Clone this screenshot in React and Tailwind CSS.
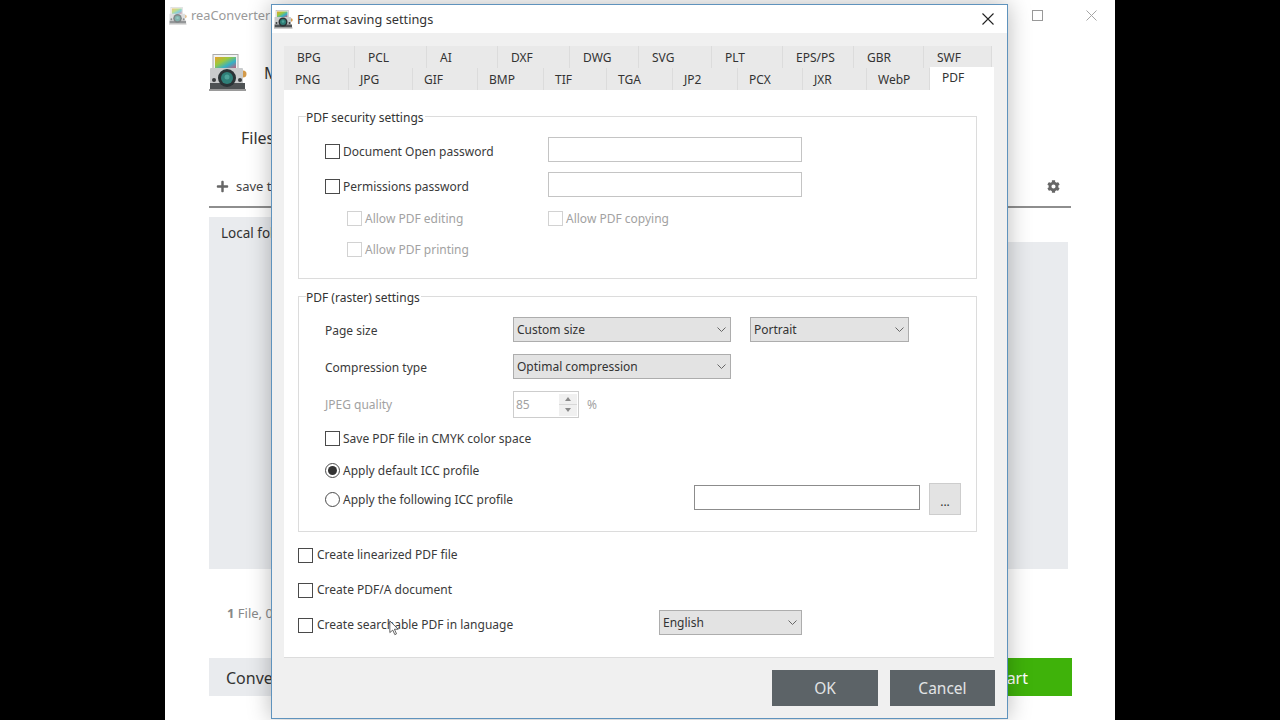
import React from 'react';
import { FaCog, FaPlus } from 'react-icons/fa';

const tabsTop = [
  ['BPG', 71], ['PCL', 72], ['AI', 71], ['DXF', 72], ['DWG', 69], ['SVG', 73], ['PLT', 71], ['EPS/PS', 71], ['GBR', 70], ['SWF', 68],
];
const tabsBottom = [
  ['PNG', 65], ['JPG', 64], ['GIF', 65], ['BMP', 66], ['TIF', 63], ['TGA', 66], ['JP2', 65], ['PCX', 65], ['JXR', 64], ['WebP', 63],
];

const Check = ({ disabled }) => (
  <span className={`block w-[15px] h-[15px] shrink-0 border ${disabled ? 'border-[#d2d2d2] bg-white' : 'border-[#4a4a4a] bg-white'}`}></span>
);

const Label = ({ children, disabled, className = '' }) => (
  <span className={`leading-none ${disabled ? 'text-[#a2a2a2]' : 'text-[#3a3a3a]'} ${className}`}>{children}</span>
);

const Select = ({ value, className = '' }) => (
  <div className={`flex items-center justify-between h-[25px] pl-[3px] pr-[4px] bg-[#e3e3e3] border border-[#adadad] text-[#333] ${className}`}>
    <span>{value}</span>
    <svg width="9" height="5" viewBox="0 0 9 5" fill="none" stroke="#666" strokeWidth="1"><path d="M0.5 0.5 L4.5 4.5 L8.5 0.5" /></svg>
  </div>
);

const Logo = ({ size }) => (
  <svg width={size} height={size} viewBox="0 0 38 38">
    <defs>
      <linearGradient id="pic" x1="0" y1="0" x2="1" y2="1">
        <stop offset="0" stopColor="#e8a02c" />
        <stop offset="0.35" stopColor="#9cc83c" />
        <stop offset="0.65" stopColor="#35b0c8" />
        <stop offset="1" stopColor="#d8506c" />
      </linearGradient>
    </defs>
    <rect x="4" y="0.5" width="25" height="17" fill="#f2f2f2" stroke="#aaa" />
    <rect x="6" y="3" width="21" height="12" fill="url(#pic)" />
    <circle cx="34" cy="20" r="3.5" fill="#d39a4a" />
    <rect x="1" y="14" width="33" height="16" rx="1" fill="#c9cbcc" />
    <rect x="1" y="29" width="35" height="6" fill="#4e5254" />
    <rect x="0" y="35" width="37" height="2" fill="#9a9a9a" />
    <circle cx="18" cy="24" r="9" fill="#2b3336" />
    <circle cx="18" cy="24" r="6" fill="#2f7f78" />
    <circle cx="18" cy="23" r="2.5" fill="#4fa39a" />
    <circle cx="5" cy="26" r="2" fill="#3a3d3f" />
    <circle cx="31" cy="26" r="2" fill="#3a3d3f" />
  </svg>
);

const App = () => {
  return (
    <div className="relative w-[1280px] h-[720px] overflow-hidden bg-black flex justify-center font-['Noto_Sans',sans-serif] text-[12px]">
      {/* app behind the dialog */}
      <div className="w-[950px] h-full bg-white flex flex-col text-[#555]">
        <div className="flex items-center justify-between h-[29px] pt-[1px] pl-[4px] pr-[18px]">
          <div className="flex items-center gap-[4px] mt-[2px]">
            <div className="opacity-60"><Logo size={18} /></div>
            <span className="text-[12.8px] text-[#9a9a9a]">reaConverter</span>
          </div>
          <div className="flex items-center gap-[43px]">
            <span className="block w-[11px] h-[11px] border border-[#999]"></span>
            <svg width="11" height="11" viewBox="0 0 11 11" stroke="#a5a5a5" strokeWidth="1"><path d="M0.5 0.5 L10.5 10.5 M10.5 0.5 L0.5 10.5" /></svg>
          </div>
        </div>
        <div className="flex items-center gap-[17px] pl-[44px] mt-[25px] h-[38px]">
          <Logo size={38} />
          <span className="text-[16px] text-[#333]">M</span>
        </div>
        <div className="pl-[76px] mt-[34px] text-[16px] text-[#333] leading-[24px]">Files</div>
        <div className="flex items-center justify-between pl-[51px] pr-[55px] mt-[26px] h-[20px]">
          <span className="flex items-center gap-[7px] text-[13px] text-[#444]"><FaPlus size={13} className="text-[#666]" /><span className="pt-[2px]">save t</span></span>
          <FaCog size={13} className="text-[#666]" />
        </div>
        <div className="ml-[44px] mr-[44px] mt-[10px] border-t-2 border-[#8e8e8e]"></div>
        <div className="ml-[44px] mr-[47px] mt-[9px] flex flex-col h-[352px]">
          <div className="w-[110px] h-[25px] bg-[#e9ebee] pl-[12px] text-[13.5px] text-[#333] leading-[33px]">Local folder</div>
          <div className="flex-1 bg-[#e9ebee]"></div>
        </div>
        <div className="pl-[62px] mt-[35px] text-[#888] text-[13px] leading-[18px]"><b>1</b> File, 0</div>
        <div className="flex ml-[44px] mr-[43px] mt-[36px] h-[38px] items-stretch justify-between">
          <div className="flex-1 bg-[#e9ebee] pl-[17px] text-[16px] text-[#333] leading-[40px]">Conve</div>
          <div className="w-[200px] bg-[#3fb20a] text-white text-[16px] leading-[40px] text-right pr-[44px]">Start</div>
        </div>
      </div>

      {/* dialog */}
      <div className="absolute left-[271px] top-[4px] w-[737px] h-[715px] bg-[#f0f0f0] border border-[#5f93bd] shadow-[0_0_22px_rgba(0,0,0,0.28)] flex flex-col">
        <div className="h-[28px] shrink-0 bg-white flex items-center justify-between pl-[2px] pr-[13px]">
          <div className="flex items-center gap-[4px]">
            <Logo size={19} />
            <span className="text-[12.75px] text-[#333] pt-[1px]">Format saving settings</span>
          </div>
          <svg width="12" height="12" viewBox="0 0 12 12" stroke="#222" strokeWidth="1.1"><path d="M0.5 0.5 L11.5 11.5 M11.5 0.5 L0.5 11.5" /></svg>
        </div>

        <div className="flex flex-col ml-[12px] mr-[13px] mt-[13px]">
          <div className="flex h-[22px]">
            {tabsTop.map(([name, w]) => (
              <div key={name} style={{ width: w }} className="flex items-center pl-[13px] pt-[2px] bg-[#e9e9e9] border-r border-[#dcdcdc] text-[#333]">{name}</div>
            ))}
          </div>
          <div className="flex h-[22px]">
            {tabsBottom.map(([name, w]) => (
              <div key={name} style={{ width: w }} className="flex items-center pl-[11px] pt-[2px] bg-[#e9e9e9] border-r border-[#dcdcdc] text-[#333]">{name}</div>
            ))}
            <div className="relative flex-1">
              <div className="absolute -top-[1px] left-0 right-0 h-[23px] bg-white pl-[12px] text-[#333] leading-[22px]">PDF</div>
            </div>
          </div>

          <div className="h-[568px] bg-white pl-[14px] pr-[17px] pt-[26px] border-b border-[#dcdcdc]">
            <fieldset className="relative h-[163px] border border-[#dcdcdc] pl-[26px]">
              <span className="absolute -top-[7px] left-[7px] bg-white text-[#333] leading-[16px] pr-[1px]">PDF security settings</span>
              <div className="flex items-center mt-[20px] h-[25px]">
                <div className="flex items-center gap-[3px] w-[223px] mt-[3px]"><Check /><Label className="pt-[2px]">Document Open password</Label></div>
                <div className="w-[254px] h-[25px] border border-[#c4c4c4] bg-white"></div>
              </div>
              <div className="flex items-center mt-[10px] h-[25px]">
                <div className="flex items-center gap-[3px] w-[223px] mt-[3px]"><Check /><Label className="pt-[2px]">Permissions password</Label></div>
                <div className="w-[254px] h-[25px] border border-[#c4c4c4] bg-white"></div>
              </div>
              <div className="flex items-center mt-[11px] h-[20px] pl-[22px]">
                <div className="flex items-center gap-[3px] w-[201px]"><Check disabled /><Label disabled className="pt-[2px]">Allow PDF editing</Label></div>
                <div className="flex items-center gap-[3px]"><Check disabled /><Label disabled className="pt-[2px]">Allow PDF copying</Label></div>
              </div>
              <div className="flex items-center mt-[11px] h-[20px] pl-[22px]">
                <div className="flex items-center gap-[3px]"><Check disabled /><Label disabled className="pt-[2px]">Allow PDF printing</Label></div>
              </div>
            </fieldset>

            <fieldset className="relative h-[236px] mt-[17px] border border-[#dcdcdc] pl-[26px]">
              <span className="absolute -top-[7px] left-[7px] bg-white text-[#333] leading-[16px] pr-[1px]">PDF (raster) settings</span>
              <div className="flex items-center mt-[20px] h-[25px]">
                <Label className="w-[188px] pt-[2px]">Page size</Label>
                <Select value="Custom size" className="w-[218px]" />
                <Select value="Portrait" className="w-[159px] ml-[19px]" />
              </div>
              <div className="flex items-center mt-[12px] h-[25px]">
                <Label className="w-[188px] pt-[2px]">Compression type</Label>
                <Select value="Optimal compression" className="w-[218px]" />
              </div>
              <div className="flex items-center mt-[12px] h-[27px]">
                <Label disabled className="w-[188px]">JPEG quality</Label>
                <div className="flex items-center w-[66px] h-[27px] border border-[#cdcdcd] bg-white pl-[2px] text-[#a2a2a2]">
                  <span className="flex-1">85</span>
                  <div className="flex flex-col w-[18px] h-[22px] mr-[1px]">
                    <span className="flex-1 flex items-center justify-center bg-[#f0f0f0] border-b border-[#d8d8d8]"><span className="w-0 h-0 border-x-[3px] border-x-transparent border-b-[4px] border-b-[#8a8a8a]"></span></span>
                    <span className="flex-1 flex items-center justify-center bg-[#f0f0f0]"><span className="w-0 h-0 border-x-[3px] border-x-transparent border-t-[4px] border-t-[#8a8a8a]"></span></span>
                  </div>
                </div>
                <Label disabled className="ml-[8px]">%</Label>
              </div>
              <div className="flex items-center gap-[3px] mt-[10px] h-[20px]"><Check /><Label className="pt-[2px]">Save PDF file in CMYK color space</Label></div>
              <div className="flex items-center gap-[3px] mt-[12px] h-[20px]">
                <span className="flex items-center justify-center w-[15px] h-[15px] rounded-full border border-[#4a4a4a]"><span className="w-[9px] h-[9px] rounded-full bg-[#333]"></span></span>
                <Label className="pt-[2px]">Apply default ICC profile</Label>
              </div>
              <div className="flex items-center mt-[3px] h-[32px]">
                <span className="w-[15px] h-[15px] rounded-full border border-[#4a4a4a]"></span>
                <Label className="ml-[3px] w-[351px] pt-[2px]">Apply the following ICC profile</Label>
                <div className="w-[226px] h-[25px] mb-[3px] border border-[#8c8c8c] bg-white"></div>
                <div className="ml-[9px] w-[32px] h-[32px] bg-[#e3e3e3] border border-[#cdcdcd] flex items-center justify-center text-[#333] leading-none pt-[6px]">...</div>
              </div>
            </fieldset>

            <div className="flex items-center gap-[4px] mt-[13px] h-[20px]"><Check /><Label>Create linearized PDF file</Label></div>
            <div className="flex items-center gap-[4px] mt-[15px] h-[20px]"><Check /><Label>Create PDF/A document</Label></div>
            <div className="flex items-center mt-[10px] h-[25px]">
              <div className="flex items-center gap-[4px] w-[361px] mt-[5px]"><Check /><Label>Create searchable PDF in language</Label></div>
              <Select value="English" className="w-[143px]" />
            </div>
          </div>
        </div>

        <div className="flex justify-end gap-[12px] mr-[12px] mt-[12px]">
          <div className="w-[106px] h-[36px] bg-[#5c6367] text-[#e2e4e5] text-[15.5px] flex items-center justify-center pt-[1px]">OK</div>
          <div className="w-[105px] h-[36px] bg-[#5c6367] text-[#e2e4e5] text-[15.5px] flex items-center justify-center pt-[1px]">Cancel</div>
        </div>

        {/* mouse pointer */}
        <svg className="absolute left-[117px] top-[615px]" width="10" height="16" viewBox="0 0 12 19" fill="white" stroke="#444" strokeWidth="1"><path d="M1 1 L1 15 L4.5 12 L7 17.5 L9 16.5 L6.5 11 L11 11 Z" /></svg>
      </div>
    </div>
  );
};

export default App;
